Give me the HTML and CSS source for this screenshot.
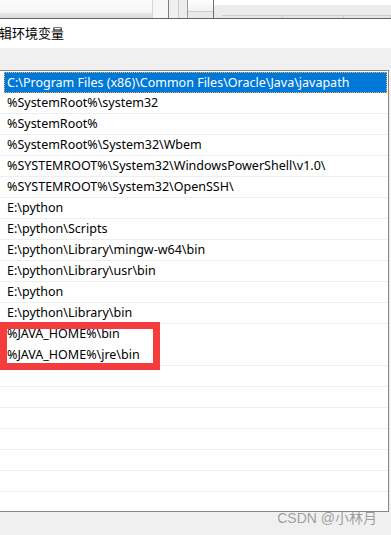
FILE: index.html
```html
<!DOCTYPE html>
<html lang="zh-CN">
<head>
    <meta charset="UTF-8">
    <meta name="viewport" content="width=device-width, initial-scale=1.0">
    <title>编辑环境变量</title>
    <link rel="stylesheet" href="styles.css">
</head>
<body>

<div class="backdrop">
    <div class="bd-pane bd-left"></div>
    <div class="bd-pane bd-a"></div>
    <div class="bd-pane bd-b"></div>
    <div class="bd-pane bd-c"></div>
    <div class="bd-pane bd-d"><div class="bd-d-top"></div></div>
    <div class="bd-pane bd-right">
        <div class="bd-box"></div>
        <div class="bd-box"></div>
        <div class="bd-box bd-box-end"></div>
    </div>
</div>

<div class="dialog">
    <div class="dialog-title">辑环境变量</div>
    <div class="dialog-gap"></div>

    <div class="listbox">
        <div class="row selected">C:\Program Files (x86)\Common Files\Oracle\Java\javapath</div>
        <div class="row">%SystemRoot%\system32</div>
        <div class="row">%SystemRoot%</div>
        <div class="row">%SystemRoot%\System32\Wbem</div>
        <div class="row">%SYSTEMROOT%\System32\WindowsPowerShell\v1.0\</div>
        <div class="row">%SYSTEMROOT%\System32\OpenSSH\</div>
        <div class="row">E:\python</div>
        <div class="row">E:\python\Scripts</div>
        <div class="row">E:\python\Library\mingw-w64\bin</div>
        <div class="row">E:\python\Library\usr\bin</div>
        <div class="row">E:\python</div>
        <div class="row">E:\python\Library\bin</div>
        <div class="row no-line">%JAVA_HOME%\bin</div>
        <div class="row">%JAVA_HOME%\jre\bin</div>
        <div class="row"></div>
        <div class="row"></div>
        <div class="row"></div>
        <div class="row"></div>
        <div class="row"></div>
        <div class="row"></div>
        <div class="row"></div>

        <div class="mark"></div>
    </div>

    <div class="footer">
        <span class="watermark">CSDN @小林月</span>
    </div>
</div>

</body>
</html>
```

FILE: styles.css
```css
/* window behind the dialog, then the dialog itself */
body {
    margin: 0;
    background-color: #f0f0f0;
    font-family: "Noto Sans", "Noto Sans CJK SC", sans-serif;
}

.backdrop {
    display: flex;
    height: 18px;
    border-bottom: 1px solid #646464;
    background: #ececec;
}
.bd-pane {
    height: 100%;
    box-sizing: border-box;
}
.bd-left {
    width: 192px;
    background: linear-gradient(#fcfcfc 0, #f6f6f6 12px, #e2e2e2 14px, #dadada 18px);
    border-right: 1px solid #d6d6d6;
}
.bd-a {
    width: 20px;
    background: #f6f6f6;
    border-right: 1px solid #7d7d7d;
}
.bd-b {
    width: 12px;
    background: #efefef;
    border-right: 1px solid #cfcfcf;
}
.bd-c {
    width: 12px;
    background: #ececec;
    border-right: 1px solid #9a9a9a;
}
.bd-d {
    width: 32px;
    background: #e9e9e9;
    border-right: 1px solid #6f6f6f;
}
.bd-d-top {
    height: 11px;
    background: linear-gradient(#fefefe, #f2f2f2);
    border-bottom: 1px solid #cdcdcd;
}
.bd-right {
    flex: 1;
    display: flex;
    align-items: flex-end;
    padding-left: 8px;
    background: linear-gradient(#ffffff 0, #ffffff 5px, #ebebeb 5px);
}
.bd-box {
    width: 60px;
    height: 2px;
    border-top: 1px solid #cdcdcd;
    border-right: 1px solid #cdcdcd;
    background: #e6e6e6;
}
.bd-box-end {
    width: 46px;
}

.dialog-title {
    height: 29px;
    line-height: 29px;
    background: #ffffff;
    font-size: 13px;
    color: #000;
    text-indent: -1px;
}
.dialog-gap {
    height: 22px;
}

.listbox {
    position: relative;
    height: 442px;
    margin-right: 2px;
    padding-top: 1px;
    box-sizing: border-box;
    background: #ffffff;
    border-top: 1px solid #828790;
    border-right: 1px solid #828790;
    border-bottom: 1px solid #828790;
    overflow: hidden;
}
.row {
    height: 20px;
    line-height: 20px;
    padding-left: 7px;
    border-bottom: 1px solid #eeeeee;
    font-size: 12.5px;
    color: #000;
    white-space: nowrap;
}
.row.no-line {
    border-bottom-color: #ffffff;
}
.row.selected {
    margin-left: 4px;
    margin-right: 1px;
    padding-left: 2px;
    height: 19px;
    line-height: 19px;
    background: #0078d7;
    color: #ffffff;
    border: 1px dotted #f3b35a;
}

.mark {
    position: absolute;
    left: 0;
    top: 251px;
    width: 160px;
    height: 48px;
    box-sizing: border-box;
    border: 7px solid #f53c3c;
}

.footer {
    height: 23px;
    padding-right: 14px;
    text-align: right;
}
.watermark {
    display: block;
    margin-top: -2px;
    line-height: 16px;
    font-size: 14px;
    color: #9c9c9c;
    font-family: "Liberation Sans", "Noto Sans CJK SC", sans-serif;
    text-shadow: 0 0 1px #ffffff;
}
```
